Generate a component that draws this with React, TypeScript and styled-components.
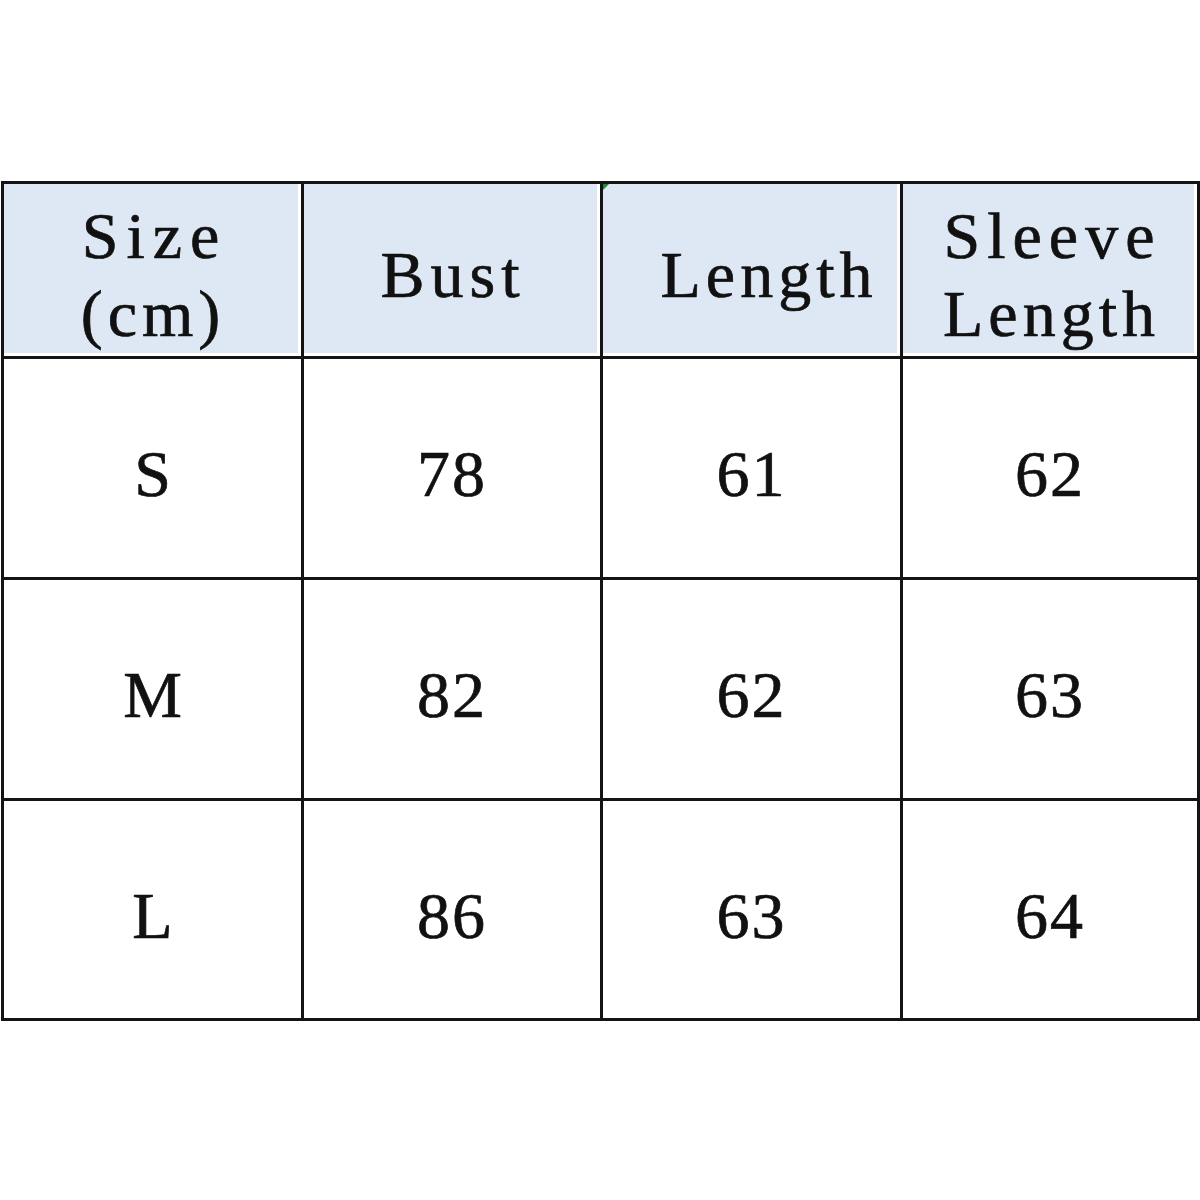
import React from "react";
import styled, { createGlobalStyle } from "styled-components";

const GlobalStyle = createGlobalStyle`
  html, body { margin: 0; padding: 0; background: #ffffff; }
  body { font-family: "Liberation Serif", "Times New Roman", serif; color: #111; }
`;

const Page = styled.div`
  width: 1200px;
  height: 1200px;
  box-sizing: border-box;
  padding: 181px 0 0 1px;
  background: #ffffff;
`;

const Table = styled.table`
  border-collapse: collapse;
  table-layout: fixed;
  width: 1198px;
`;

const Col = styled.col<{ $w: number }>`
  width: ${(p) => p.$w}px;
`;

const HeadRow = styled.tr`
  height: 175px;
`;

const BodyRow = styled.tr<{ $h: number }>`
  height: ${(p) => p.$h}px;
`;

const HeadCell = styled.th`
  position: relative;
  border: 3px solid #141414;
  background: #dde8f4;
  box-shadow: inset -3px -3px 0 #ffffff;
  padding: 10px 0 0 0;
  text-align: center;
  vertical-align: middle;
  font-weight: 400;
  font-size: 66px;
  line-height: 78px;
  color: #111;
  -webkit-text-stroke: 0.7px #111;
`;

const BodyCell = styled.td`
  border: 3px solid #141414;
  background: #ffffff;
  padding: 12px 0 0 0;
  text-align: center;
  vertical-align: middle;
  font-size: 66px;
  line-height: 76px;
  color: #111;
  -webkit-text-stroke: 0.7px #111;
`;

const Line = styled.div<{ $ls?: number; $shift?: number }>`
  white-space: nowrap;
  letter-spacing: ${(p) => p.$ls ?? 2}px;
  padding-left: ${(p) => (p.$ls ?? 2) + (p.$shift ?? 0) * 2}px;
`;

const Marker = styled.span`
  position: absolute;
  left: 0;
  top: 0;
  width: 0;
  height: 0;
  border-top: 6px solid #1f8a2c;
  border-right: 6px solid transparent;
`;

const rows = [
  { size: "S", bust: "78", length: "61", sleeve: "62", h: 221 },
  { size: "M", bust: "82", length: "62", sleeve: "63", h: 221 },
  { size: "L", bust: "86", length: "63", sleeve: "64", h: 220 },
];

export default function App() {
  return (
    <>
      <GlobalStyle />
      <Page>
        <Table>
          <colgroup>
            <Col $w={300} />
            <Col $w={299} />
            <Col $w={300} />
            <Col $w={297} />
          </colgroup>
          <thead>
            <HeadRow>
              <HeadCell>
                <Line $ls={8} $shift={-2}>Size</Line>
                <Line $ls={5} $shift={-2}>(cm)</Line>
              </HeadCell>
              <HeadCell>
                <Line $ls={6} $shift={-2}>Bust</Line>
              </HeadCell>
              <HeadCell>
                <Marker />
                <Line $ls={5} $shift={15}>Length</Line>
              </HeadCell>
              <HeadCell>
                <Line $ls={7} $shift={-1}>Sleeve</Line>
                <Line $ls={5} $shift={-1}>Length</Line>
              </HeadCell>
            </HeadRow>
          </thead>
          <tbody>
            {rows.map((r) => (
              <BodyRow key={r.size} $h={r.h}>
                <BodyCell>
                  <Line>{r.size}</Line>
                </BodyCell>
                <BodyCell>
                  <Line $shift={-1}>{r.bust}</Line>
                </BodyCell>
                <BodyCell>
                  <Line $shift={-1}>{r.length}</Line>
                </BodyCell>
                <BodyCell>
                  <Line $shift={-1}>{r.sleeve}</Line>
                </BodyCell>
              </BodyRow>
            ))}
          </tbody>
        </Table>
      </Page>
    </>
  );
}
